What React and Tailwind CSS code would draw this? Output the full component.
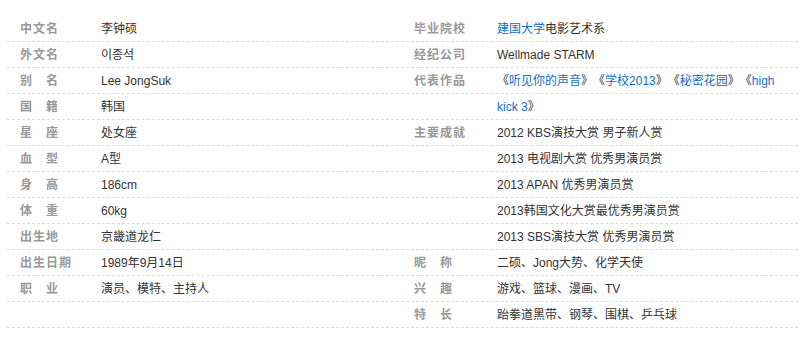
import React from 'react'

const font = { fontFamily: '"Liberation Sans", Arial, "Noto Sans CJK SC", sans-serif' }

// Label with optional spread for two-char names (e.g. 别 名)
function Label({ text }) {
  if (!text) return null
  if (text.length === 2) {
    return (
      <span className="font-bold text-[#999] tracking-[1px]">
        <span className="inline-block w-[26px]">{text[0]}</span>
        {text[1]}
      </span>
    )
  }
  return <span className="font-bold text-[#999] tracking-[1px]">{text}</span>
}

const A = ({ children }) => <span className="text-[#136ec2]">{children}</span>

const rows = [
  { l: '中文名', lv: '李钟硕', r: '毕业院校', rv: <><A>建国大学</A>电影艺术系</> },
  { l: '外文名', lv: '이종석', r: '经纪公司', rv: 'Wellmade STARM' },
  { l: '别名', lv: 'Lee JongSuk', r: '代表作品', rv: <>《<A>听见你的声音</A>》《<A>学校2013</A>》《<A>秘密花园</A>》《<A>high</A></> },
  { l: '国籍', lv: '韩国', r: '', rv: <><A>kick 3</A>》</> },
  { l: '星座', lv: '处女座', r: '主要成就', rv: '2012 KBS演技大赏 男子新人赏' },
  { l: '血型', lv: 'A型', r: '', rv: '2013 电视剧大赏 优秀男演员赏' },
  { l: '身高', lv: '186cm', r: '', rv: '2013 APAN 优秀男演员赏' },
  { l: '体重', lv: '60kg', r: '', rv: '2013韩国文化大赏最优秀男演员赏' },
  { l: '出生地', lv: '京畿道龙仁', r: '', rv: '2013 SBS演技大赏 优秀男演员赏' },
  { l: '出生日期', lv: '1989年9月14日', r: '昵称', rv: '二硕、Jong大势、化学天使' },
  { l: '职业', lv: '演员、模特、主持人', r: '兴趣', rv: '游戏、篮球、漫画、TV' },
  { l: '', lv: '', r: '特长', rv: '跆拳道黑带、钢琴、围棋、乒乓球' },
]

export default function App() {
  return (
    <div className="w-[805px] h-[341px] bg-white pt-[16px] pl-[7px] text-[12px] text-[#333] [text-spacing-trim:space-all]" style={font}>
      <div className="w-[791px] flex flex-col">
        {rows.map((row, i) => (
          <div key={i} className="h-[26px] flex items-center border-b border-dashed border-[#dcdcdc] whitespace-nowrap">
            <div className="w-[94px] pl-[13px]"><Label text={row.l} /></div>
            <div className="w-[300px]">{row.lv}</div>
            <div className="w-[96px] pl-[13px]"><Label text={row.r} /></div>
            <div className="flex-1">{row.rv}</div>
          </div>
        ))}
      </div>
    </div>
  )
}
